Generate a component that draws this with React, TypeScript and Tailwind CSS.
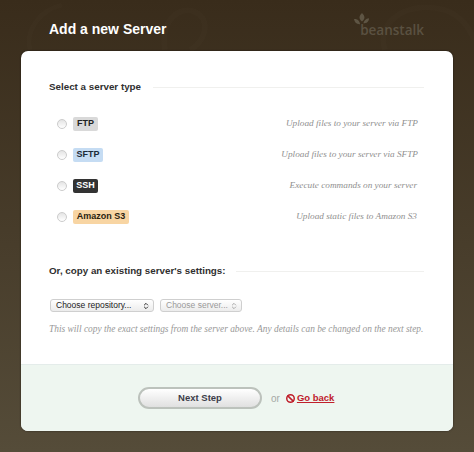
import { Ban, ChevronsUpDown } from 'lucide-react';

const serverTypes = [
    { id: 'ftp', label: 'FTP', badge: 'bg-[#d9d9d9] text-[#222222]', width: 'w-[25px]', note: 'Upload files to your server via FTP', noteEdge: 'pr-[2px]' },
    { id: 'sftp', label: 'SFTP', badge: 'bg-[#c5dcf3] text-[#1c2a38]', width: 'w-[30px]', note: 'Upload files to your server via SFTP', noteEdge: 'pr-[2px]' },
    { id: 'ssh', label: 'SSH', badge: 'bg-[#333333] text-white', width: 'w-[25px]', note: 'Execute commands on your server', noteEdge: 'pr-[3px]' },
    { id: 's3', label: 'Amazon S3', badge: 'bg-[#f8d5a3] text-[#2a1f10]', width: 'w-[56px]', note: 'Upload static files to Amazon S3', noteEdge: 'pr-[3px]' },
];

// Beanstalk mark: three leaves over the wordmark
function Logo() {
    return (
        <div className="relative flex h-[24px] w-[70px] items-end justify-end">
            <svg width="15" height="15" viewBox="0 0 16 16" className="absolute left-0 top-0 text-[#5e5544]">
                <path d="M8.500 0 C12 3.500 12 6.500 8.500 9 C5 6.500 5 3.500 8.500 0 Z" fill="currentColor" />
                <path d="M0 6.500 C3.500 6 6 8.500 6.500 12 C3 12.500 0.500 10 0 6.500 Z" fill="currentColor" />
                <path d="M16 5.500 C16 9 13.500 11 10 11 C10.500 8 12.500 6 16 5.500 Z" fill="currentColor" />
            </svg>
            <span className="font-['Open_Sans',sans-serif] text-[13.500px] font-semibold leading-[14px] text-[#5a5141]">
                beanstalk
            </span>
        </div>
    );
}

// Faint swirls in the page background
function Swirls() {
    return (
        <svg width="474" height="60" viewBox="0 0 474 60" fill="none" className="absolute left-0 top-0 text-white/[0.012]">
            <path d="M165 50 C160 20 180 5 195 12 C212 20 205 42 190 50" stroke="currentColor" strokeWidth="6" />
            <path d="M30 50 C25 30 40 10 62 5" stroke="currentColor" strokeWidth="5" />
            <path d="M385 50 C375 20 410 0 445 10 C460 15 470 28 474 40" stroke="currentColor" strokeWidth="6" />
        </svg>
    );
}

function SectionTitle({ children, gap }: { children: string; gap: string }) {
    return (
        <div className={`flex items-center ${gap} pl-[28px] pr-[29px]`}>
            <h2 className="whitespace-nowrap text-[9.800px] font-bold leading-[14px] text-[#2f2f2f]">{children}</h2>
            <div className="h-px flex-1 bg-[#f0f0ee]" />
        </div>
    );
}

function FakeSelect({ label, width, disabled }: { label: string; width: string; disabled?: boolean }) {
    return (
        <div
            className={`flex h-[13px] ${width} items-center justify-between rounded-[3px] border border-[#cfcfcf] bg-gradient-to-b from-white to-[#ececec] pl-[5px] pr-[3px] text-[8.500px] ${
                disabled ? 'text-[#9a9a9a]' : 'text-[#222222]'
            }`}
        >
            <span className="whitespace-nowrap">{label}</span>
            <ChevronsUpDown className={`h-[8px] w-[8px] ${disabled ? 'text-[#aaaaaa]' : 'text-[#333333]'}`} strokeWidth={3} />
        </div>
    );
}

export default function App() {
    return (
        <div className="relative flex h-[452px] w-[474px] flex-col overflow-hidden bg-gradient-to-b from-[#392c1b] to-[#554c39] px-[21px] font-['Liberation_Sans',Arial,sans-serif]">
            <Swirls />

            {/* Header */}
            <div className="relative flex h-[51px] shrink-0 items-start justify-between pl-[28px] pr-[29px] pt-[13px]">
                <h1 className="mt-[7px] text-[14px] font-bold leading-[18px] text-white">Add a new Server</h1>
                <Logo />
            </div>

            {/* Card */}
            <div className="relative flex h-[380px] flex-col overflow-hidden rounded-[7px] bg-white shadow-[0_0_2px_rgba(0,0,0,0.6)]">
                <div className="flex-1 pt-[29px]">
                    <SectionTitle gap="gap-[12px]">Select a server type</SectionTitle>

                    <div className="mt-[23px] flex flex-col gap-[18px] pl-[36px] pr-[33px]">
                        {serverTypes.map((t) => (
                            <div key={t.id} className="flex h-[13px] items-center">
                                <span className="h-[10px] w-[10px] shrink-0 rounded-full border border-[#cccccc] bg-gradient-to-b from-[#e4e4e4] to-white" />
                                <span
                                    className={`ml-[6px] flex h-[14px] ${t.width} shrink-0 items-center justify-center rounded-[2px] text-[9px] font-bold ${t.badge}`}
                                >
                                    {t.label}
                                </span>
                                <span
                                    className={`flex-1 text-right font-['Liberation_Serif',Georgia,serif] text-[9.250px] italic text-[#8f8f8f] ${t.noteEdge}`}
                                >
                                    {t.note}
                                </span>
                            </div>
                        ))}
                    </div>

                    <div className="mt-[41px]">
                        <SectionTitle gap="gap-[10px]">{"Or, copy an existing server's settings:"}</SectionTitle>
                    </div>

                    <div className="mt-[21px] flex gap-[6px] pl-[29px]">
                        <FakeSelect label="Choose repository..." width="w-[104px]" />
                        <FakeSelect label="Choose server..." width="w-[82px]" disabled />
                    </div>

                    <p className="mt-[10px] whitespace-nowrap pl-[28px] font-['Liberation_Serif',Georgia,serif] text-[9.400px] italic leading-[14px] text-[#989898]">
                        This will copy the exact settings from the server above. Any details can be changed on the next step.
                    </p>
                </div>

                {/* Footer */}
                <div className="flex h-[67px] shrink-0 items-center border-t border-[#e4ecea] bg-[#eef6f0] pl-[117px]">
                    <button className="h-[22px] w-[124px] rounded-full border-2 border-[#bcc2bc] bg-gradient-to-b from-white to-[#e0e0e0] text-[9.500px] font-bold text-[#3d3d4a]">
                        Next Step
                    </button>
                    <span className="ml-[9px] text-[10px] text-[#a5a9a5]">or</span>
                    <a className="ml-[6px] flex items-center gap-[2px] text-[9.500px] font-bold text-[#c0202c] underline">
                        <Ban className="h-[9px] w-[9px]" strokeWidth={4} />
                        Go back
                    </a>
                </div>
            </div>
        </div>
    );
}
